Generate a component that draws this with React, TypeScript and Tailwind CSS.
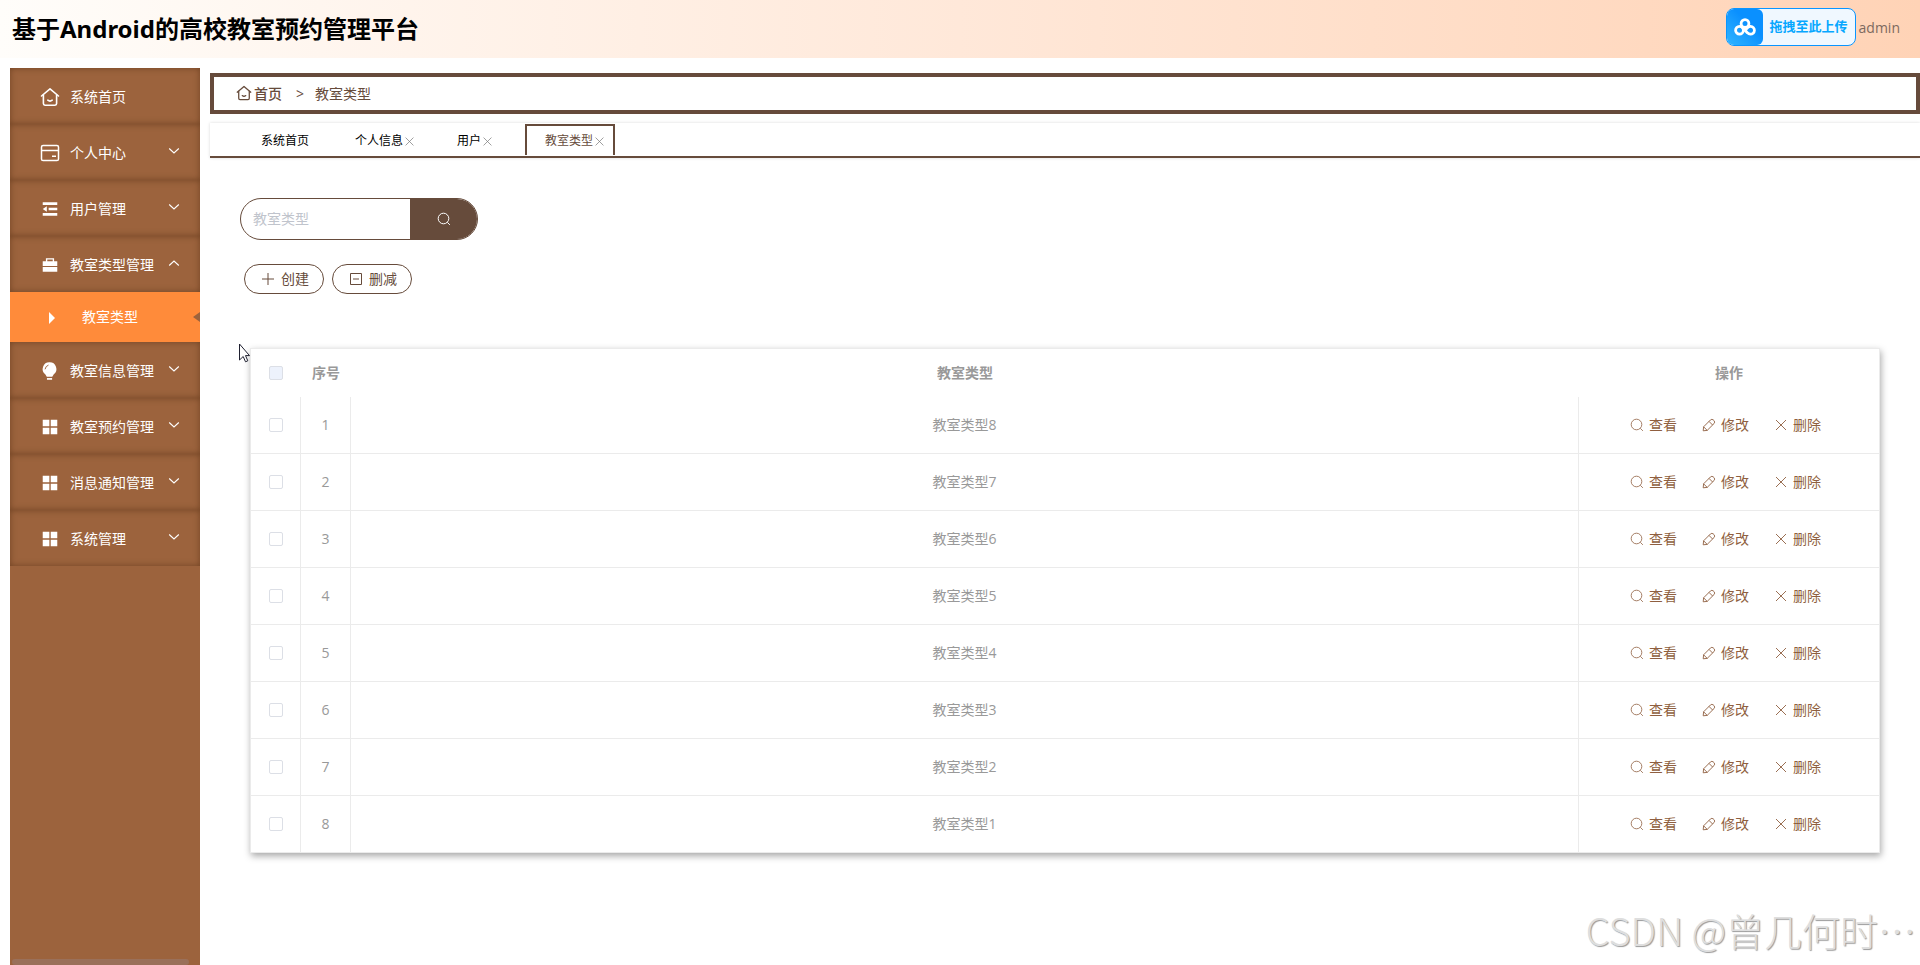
import { useState } from "react";

const IconHome = (props: any) => (
  <svg viewBox="0 0 20 20" fill="none" stroke="currentColor" strokeWidth="1.6" strokeLinejoin="round" strokeLinecap="round" {...props}>
    <path d="M1.5 9 10 1.8 18.5 9" />
    <path d="M3.4 8v8.6q0 1.6 1.6 1.6h10q1.6 0 1.6-1.6V8" />
    <path d="M7.8 13.2q2.2 1.8 4.4 0" />
  </svg>
);

const IconCard = (props: any) => (
  <svg viewBox="0 0 20 20" fill="none" stroke="currentColor" strokeWidth="1.5" {...props}>
    <rect x="1.5" y="2.5" width="17" height="15" rx="1.6" />
    <path d="M1.5 7.5h17M12 13.2h4" />
  </svg>
);

const IconFold = (props: any) => (
  <svg viewBox="-1 -1 22 22" fill="currentColor" {...props}>
    <path d="M2 2.500h16v3H2zM8.500 8.500H18v3H8.500zM2 14.500h16v3H2zM6.500 7v6L2 10z" />
  </svg>
);

const IconCase = (props: any) => (
  <svg viewBox="-1 -1 22 22" fill="currentColor" {...props}>
    <path d="M5.500 6V2.500h9V6H18v5H2V6zM7 4v2h6V4zM2 12.200h16v5.300H2z" fillRule="evenodd" />
  </svg>
);

const IconBulb = (props: any) => (
  <svg viewBox="-0.5 -0.5 21 21" fill="currentColor" {...props}>
    <path d="M9.500.8a7 7 0 0 0-4.500 12.500l1.600 2.800h5.800l1.600-2.800A7 7 0 0 0 9.500.8z" />
    <path d="M6.800 17.400h5.400v1.800H6.800z" />
    <path d="M4.800 8.200q.6-3.400 3.600-4.400" stroke="#9c633d" strokeWidth="1" fill="none" />
  </svg>
);

const IconGrid = (props: any) => (
  <svg viewBox="-1 -1 22 22" fill="currentColor" {...props}>
    <path d="M2 2h7.300v7.300H2zM10.800 2H18v7.300h-7.200zM2 10.800h7.300V18H2zM10.800 10.800H18V18h-7.200z" />
  </svg>
);

const IconArrow = (props: any) => (
  <svg viewBox="0 0 12 12" fill="none" stroke="currentColor" strokeWidth="1.1" {...props}>
    <path d="M1.200 3.500 6 8l4.800-4.500" />
  </svg>
);

const IconSearch = (props: any) => (
  <svg viewBox="0 0 14 14" fill="none" stroke="currentColor" {...props}>
    <circle cx="6.500" cy="6.500" r="5.300" />
    <path d="m10.300 10.300 2.600 2.600" />
  </svg>
);

const IconEdit = (props: any) => (
  <svg viewBox="0 0 14 14" fill="none" stroke="currentColor" strokeWidth="0.9" strokeLinejoin="round" {...props}>
    <path d="M1.200 12.800 1.600 8.800 8.400 2q1.500-1.400 3 0l.6.6q1.400 1.500 0 3L5.200 12.400zM7 3.400l3.600 3.600M1.600 8.800l3.600 3.600" />
  </svg>
);

const IconClose = (props: any) => (
  <svg viewBox="0 0 14 14" fill="none" stroke="currentColor" strokeWidth="0.9" {...props}>
    <path d="m2 2 10 10M12 2 2 12" />
  </svg>
);

const IconPlus = (props: any) => (
  <svg viewBox="0 0 14 14" fill="none" stroke="currentColor" {...props}>
    <path d="M7 1v12M1 7h12" />
  </svg>
);

const IconMinus = (props: any) => (
  <svg viewBox="0 0 14 14" fill="none" stroke="currentColor" {...props}>
    <path d="M1.500 1.500h11v11h-11zM4 7h6" />
  </svg>
);

const IconCloud = (props: any) => (
  <svg viewBox="0 0 22 18" fill="none" stroke="currentColor" strokeWidth="2.800" {...props}>
    <circle cx="11" cy="5.500" r="3.900" />
    <circle cx="5.500" cy="12.300" r="3.900" />
    <path d="m8.200 9.400 5.400 5.500a3.900 3.900 0 1 0 .2-5.400l-2 2" />
  </svg>
);

const menus = [
  { title: "系统首页", icon: IconHome },
  { title: "个人中心", icon: IconCard, arrow: true },
  { title: "用户管理", icon: IconFold, arrow: true },
  { title: "教室类型管理", icon: IconCase, arrow: true, children: ["教室类型"] },
  { title: "教室信息管理", icon: IconBulb, arrow: true },
  { title: "教室预约管理", icon: IconGrid, arrow: true },
  { title: "消息通知管理", icon: IconGrid, arrow: true },
  { title: "系统管理", icon: IconGrid, arrow: true },
];

const rows = [8, 7, 6, 5, 4, 3, 2, 1].map((n) => "教室类型" + n);

const Header = () => (
  <header className="flex h-[58px] items-center justify-between bg-linear-to-r from-[#fffdfa] via-[#ffe8d9] to-[#ffd3b6] pl-3 pr-5">
    <h1 className="font-['Noto_Sans','Noto_Sans_CJK_SC',sans-serif] text-2xl font-bold text-black">
      基于Android的高校教室预约管理平台
    </h1>
    <div className="flex items-center gap-[3px] pb-1">
      <button className="flex h-[38px] w-[130px] items-center overflow-hidden rounded-lg border border-[#0a95ff] bg-[#f0f8ff]">
        <span className="flex h-full w-9 items-center justify-center rounded-r-md bg-linear-to-tr from-[#2fb4ff] to-[#0a90ff] to-60%">
          <IconCloud className="h-[18px] w-[22px] text-white" />
        </span>
        <span className="flex-1 text-center text-[13px] font-bold text-[#06a7ff]">拖拽至此上传</span>
      </button>
      <span className="text-[14px] text-[#7d6a5f]">admin</span>
    </div>
  </header>
);

const Sidebar = () => (
  <aside className="relative w-[190px] shrink-0 bg-[#9c633d] text-sm text-white">
    <nav>
      {menus.map((m) => (
        <div key={m.title}>
          <button className="flex h-14 w-full items-center pl-[30px] pr-5 pt-px shadow-[inset_0_0_6px_rgba(70,35,10,0.5)]">
            <m.icon className="h-5 w-5" />
            <span className="ml-[10px]">{m.title}</span>
            {m.arrow && (
              <IconArrow className={m.children ? "mb-1 ml-auto h-3 w-3 rotate-180" : "mb-1 ml-auto h-3 w-3"} />
            )}
          </button>
          {m.children?.map((c) => (
            <a key={c} href="#" className="flex h-[50px] items-center justify-between bg-[#ff8b3a] pl-[39px]">
              <span className="mt-[2px] h-0 w-0 border-y-6 border-l-6 border-y-transparent border-l-white" />
              <span className="ml-[27px] flex-1">{c}</span>
              <span className="h-0 w-0 border-y-5 border-r-7 border-y-transparent border-r-[#9c633d]" />
            </a>
          ))}
        </div>
      ))}
    </nav>
    <div className="absolute bottom-0 left-[2px] h-[6px] w-[177px] rounded-full bg-[#9a705a]" />
  </aside>
);

const Tabs = () => (
  <div className="mt-[9px] flex h-[35px] items-start border-b-2 border-[#664b3b] pl-[31px] pt-px text-xs text-black shadow-[0_0_3px_rgba(0,0,0,0.15)]">
    <button className="h-[34px] w-[94px] pl-5 text-left">系统首页</button>
    <button className="flex h-[34px] items-center pl-5 pr-[22px]">
      个人信息
      <IconClose className="ml-px h-[11px] w-[11px] text-[#777]" />
    </button>
    <button className="flex h-[34px] items-center pl-5 pr-[32px]">
      用户
      <IconClose className="ml-px h-[11px] w-[11px] text-[#777]" />
    </button>
    <button className="flex h-[31px] items-center border-2 border-b-0 border-[#664b3b] pl-[18px] pr-[8px] pt-px text-[#664b3b]">
      教室类型
      <IconClose className="ml-px h-[11px] w-[11px] text-[#777]" />
    </button>
  </div>
);

const checkbox =
  "block mx-auto h-[14px] w-[14px] appearance-none rounded-[2px] border border-[#dcdfe6] bg-white checked:bg-[#9c633d]";

const cell = "border-b border-r border-[#ebebeb]";

const Table = () => (
  <div className="mx-10 mt-[54px] border border-b-0 border-[#ebebeb] shadow-[1px_3px_7px_rgba(0,0,0,0.35)]">
    <table className="w-full table-fixed border-separate border-spacing-0 text-center text-sm text-[#999]">
      <colgroup>
        <col className="w-[50px]" />
        <col className="w-[50px]" />
        <col />
        <col className="w-[300px]" />
      </colgroup>
      <thead>
        <tr className="h-12">
          <th>
            <input type="checkbox" aria-label="全选" disabled className="mx-auto block h-[14px] w-[14px] appearance-none rounded-[2px] border border-[#dcdfe6] bg-[#edf2fc]" />
          </th>
          <th>序号</th>
          <th>教室类型</th>
          <th>操作</th>
        </tr>
      </thead>
      <tbody>
        {rows.map((name, i) => (
          <tr key={name} className="h-[57px]">
            <td className={cell}>
              <input type="checkbox" aria-label={name} className={checkbox} />
            </td>
            <td className={cell}>{i + 1}</td>
            <td className={cell}>{name}</td>
            <td className="border-b border-[#ebebeb]">
              <div className="flex justify-center gap-[25px] pr-[7px] text-[#8f5f40]">
                <button className="flex items-center gap-[5px]">
                  <IconSearch className="h-[14px] w-[14px]" strokeWidth="0.8" />
                  查看
                </button>
                <button className="flex items-center gap-[5px]">
                  <IconEdit className="h-[14px] w-[14px]" />
                  修改
                </button>
                <button className="flex items-center gap-[5px]">
                  <IconClose className="h-[14px] w-[14px]" />
                  删除
                </button>
              </div>
            </td>
          </tr>
        ))}
      </tbody>
    </table>
  </div>
);

const App = () => {
  const [keyword, setKeyword] = useState("");

  return (
    <div className="relative flex min-h-screen flex-col overflow-hidden bg-white font-['Open_Sans','Noto_Sans_CJK_SC',sans-serif]">
      <Header />
      <div className="flex flex-1 gap-[10px] pl-[10px] pt-[10px]">
        <Sidebar />
        <main className="min-w-0 flex-1 pt-[5px]">
          <div className="flex h-[41px] items-center border-4 border-[#664b3b] pl-[22px] text-sm text-[#664b3b]">
            <IconHome className="mb-px h-4 w-4" />
            <a href="#" className="ml-[2px] font-medium">首页</a>
            <span className="ml-[14px] mr-[11px] font-medium">&gt;</span>
            <span>教室类型</span>
          </div>
          <Tabs />
          <form
            onSubmit={(e) => e.preventDefault()}
            className="ml-[30px] mt-10 flex h-[42px] w-[238px] overflow-hidden rounded-full border border-[#664b3b]"
          >
            <input
              className="w-[169px] pl-3 text-sm outline-none placeholder:text-[#c0c4cc]"
              placeholder="教室类型"
              aria-label="教室类型"
              value={keyword}
              onChange={(e) => setKeyword(e.target.value)}
            />
            <button aria-label="搜索" className="flex flex-1 items-center justify-center bg-[#664b3b] text-white">
              <IconSearch className="h-[14px] w-[14px]" />
            </button>
          </form>
          <div className="ml-[34px] mt-6 flex gap-2 text-sm text-[#664b3b]">
            <button className="flex h-[30px] w-20 items-center justify-center gap-[6px] rounded-full border border-[#664b3b] pl-[2px]">
              <IconPlus className="h-[14px] w-[14px]" />
              创建
            </button>
            <button className="flex h-[30px] w-20 items-center justify-center gap-[6px] rounded-full border border-[#664b3b] pl-[2px]">
              <IconMinus className="h-[14px] w-[14px]" />
              删减
            </button>
          </div>
          <Table />
        </main>
      </div>
      <svg viewBox="0 0 12 20" className="absolute left-[238px] top-[343px] h-5 w-3" fill="#fff" stroke="#1f2030">
        <path d="M1.500 1v16l3.700-3.500 2.300 5.300 2.300-1-2.300-5.200h4z" />
      </svg>
      <div className="absolute bottom-[7px] right-1 font-['Noto_Sans_CJK_SC',sans-serif] text-[38px] font-light leading-[56px] text-[#dedede] [text-shadow:1px_1px_1px_#999]">
        CSDN @曾几何时…
      </div>
    </div>
  );
};

export default App;
